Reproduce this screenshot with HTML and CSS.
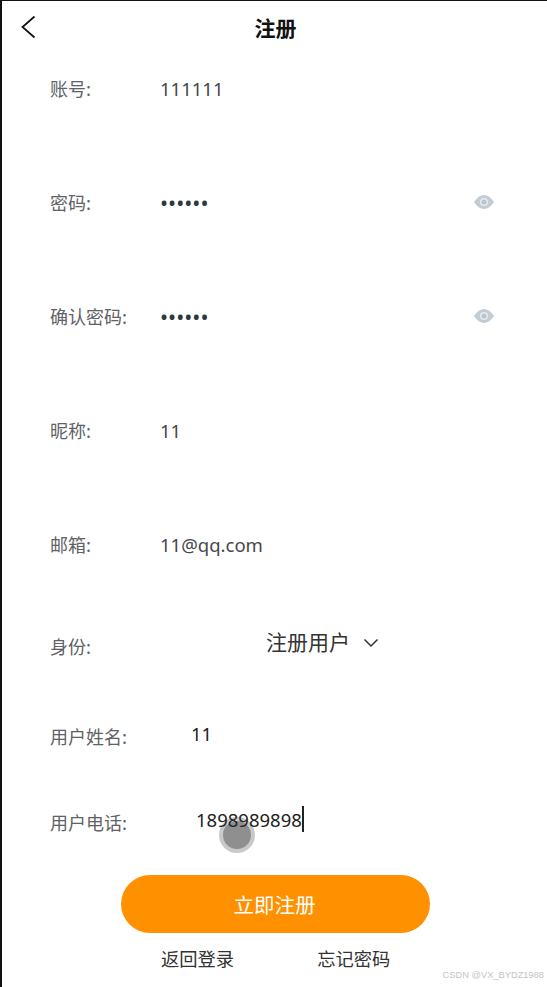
FILE: index.html
```html
<!DOCTYPE html>
<html lang="zh-CN">
<head>
<meta charset="utf-8">
<title>注册</title>
<link rel="stylesheet" href="styles.css">
</head>
<body>
<div class="page">
  <header class="nav">
    <svg class="back" width="16" height="24" viewBox="0 0 16 24"><path d="M14.5 1.5 2.5 12l12 10.5" fill="none" stroke="#111" stroke-width="1.7"/></svg>
    <h1 class="title">注册</h1>
  </header>
  <main class="form">
    <div class="row tall first"><span class="label">账号:</span><span class="value">111111</span></div>
    <div class="row tall"><span class="label">密码:</span><span class="value dots">••••••</span>
      <svg class="eye" width="20" height="14" viewBox="0 0 20 14"><path d="M0 7C3 2.5 6.300 0 10 0s7 2.500 10 7c-3 4.500-6.300 7-10 7S3 11.500 0 7Z" fill="#c3cbd3"/><circle cx="10" cy="7" r="4" fill="#e9edf0"/><circle cx="10" cy="7" r="2.600" fill="#bcc5ce"/></svg></div>
    <div class="row tall"><span class="label">确认密码:</span><span class="value dots">••••••</span>
      <svg class="eye" width="20" height="14" viewBox="0 0 20 14"><path d="M0 7C3 2.500 6.300 0 10 0s7 2.500 10 7c-3 4.500-6.300 7-10 7S3 11.500 0 7Z" fill="#c3cbd3"/><circle cx="10" cy="7" r="4" fill="#e9edf0"/><circle cx="10" cy="7" r="2.600" fill="#bcc5ce"/></svg></div>
    <div class="row tall"><span class="label">昵称:</span><span class="value">11</span></div>
    <div class="row tall"><span class="label">邮箱:</span><span class="value">11@qq.com</span></div>
    <div class="row role"><span class="label">身份:</span>
      <span class="select">注册用户<svg class="chev" width="16" height="10" viewBox="0 0 16 10"><path d="M1.500 1.500 8 8l6.500-6.500" fill="none" stroke="#333" stroke-width="1.500"/></svg></span></div>
    <div class="row name"><span class="label">用户姓名:</span><span class="value strong">11</span></div>
    <div class="row phone"><span class="label">用户电话:</span><span class="value strong typed">1898989898</span></div>
    <div class="touch"></div>
  </main>
  <button class="submit" type="button">立即注册</button>
  <nav class="links"><a>返回登录</a><a>忘记密码</a></nav>
  <span class="mark">CSDN @VX_BYDZ1988</span>
</div>
</body>
</html>
```
FILE: styles.css
```css
* { box-sizing: border-box; }
html, body { margin: 0; padding: 0; }
body { background: #fff; font-family: "Noto Sans", "Noto Sans CJK SC", sans-serif; }
.page {
  position: relative;
  width: 547px;
  height: 987px;
  overflow: hidden;
  background: #fff;
  border-top: 1px solid #111;
  border-left: 2px solid #111;
}
.nav {
  position: relative;
  height: 56px;
  display: flex;
  align-items: center;
  justify-content: center;
}
.back { position: absolute; left: 18px; top: 14px; }
.title { margin: 0; font-size: 21px; line-height: 54px; font-weight: 700; color: #111; padding: 0 0 2px 2px; }
.form { position: relative; padding-left: 48px; }
.row { display: flex; align-items: center; position: relative; }
.tall { height: 114px; }
.first { margin-top: -26px; }
.label { width: 110px; flex: none; font-size: 18px; line-height: 24px; color: #606266; font-family: "Noto Sans CJK SC", sans-serif; }
.value { font-size: 18.500px; color: #44474d; line-height: 24px; padding-top: 2px; }
.dots { color: #2f3640; font-size: 21.500px; }
.eye { position: absolute; left: 424px; top: 50px; }
.role { height: 66px; margin-top: 12px; }
.select { margin-left: 106px; display: flex; align-items: center; gap: 13px; font-size: 21px; color: #333; font-family: "Noto Sans CJK SC", sans-serif; line-height: 26px; position: relative; top: -5px; }
.chev { position: relative; top: 2px; }
.name { height: 86px; margin-top: 14px; }
.name .value { margin-left: 31px; position: relative; top: -3px; }
.phone { height: 86px; }
.phone .value { margin-left: 36px; position: relative; top: -3px; z-index: 1; }
.strong { color: #222; }
.typed { border-right: 2px solid #222; line-height: 24px; }
.touch {
  position: absolute;
  left: 217px;
  top: 0;
  width: 36px;
  height: 36px;
  border-radius: 50%;
  background: #8f8f8f;
  border: 4px solid #c9c9c9;
  margin-top: 786px;
}
.submit {
  position: absolute;
  left: 119px;
  top: 874px;
  width: 309px;
  height: 58px;
  border: 0;
  border-radius: 29px;
  padding: 0 2px 0 0;
  background: #ff9000;
  color: #fff;
  font-size: 20.500px;
  font-family: "Noto Sans CJK SC", sans-serif;
}
.links { position: absolute; left: 159px; top: 945px; display: flex; gap: 83px; font-size: 18.300px; line-height: 24px; color: #333; font-family: "Noto Sans CJK SC", sans-serif; }
.mark { position: absolute; right: 3px; top: 968px; font-size: 9.300px; line-height: 12px; color: #c4c4c4; font-family: "Liberation Sans", sans-serif; }
```
